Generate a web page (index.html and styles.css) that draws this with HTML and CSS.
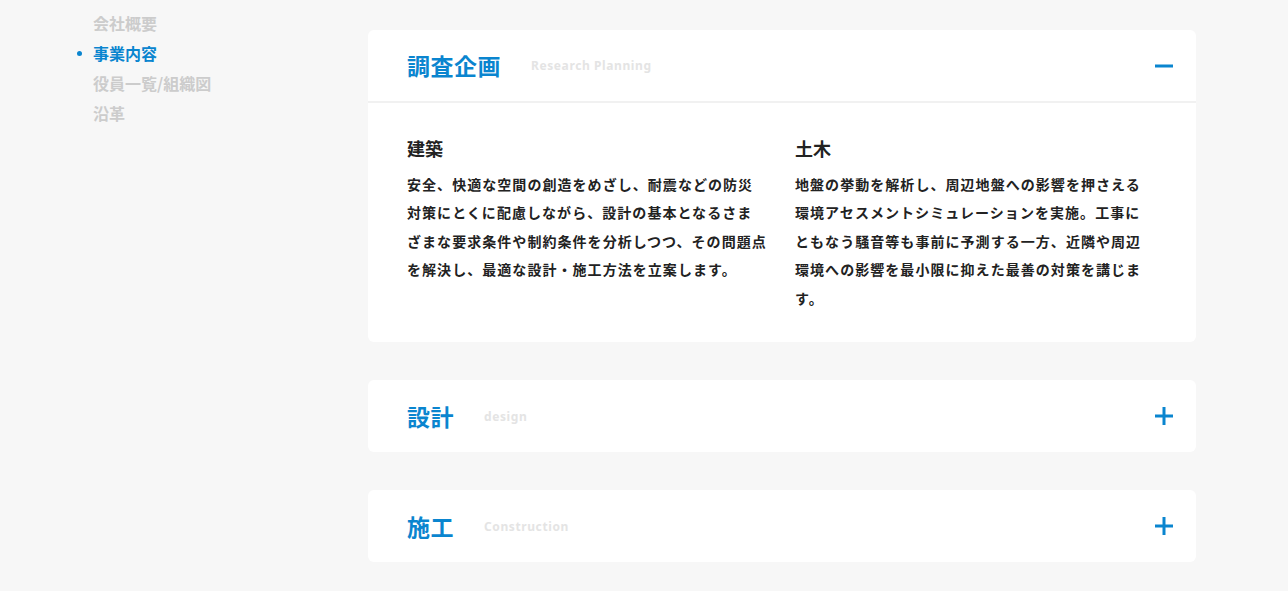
FILE: index.html
```html
<!DOCTYPE html>
<html lang="ja">
<head>
<meta charset="utf-8">
<title>事業内容</title>
<link rel="stylesheet" href="styles.css">
</head>
<body>
<div class="page">
  <nav class="sidebar">
    <ul class="nav">
      <li class="nav-item">会社概要</li>
      <li class="nav-item is-active">事業内容</li>
      <li class="nav-item">役員一覧/組織図</li>
      <li class="nav-item">沿革</li>
    </ul>
  </nav>
  <main class="main">
    <section class="card is-open">
      <header class="card-head">
        <h2 class="card-title">調査企画</h2>
        <span class="card-sub">Research Planning</span>
        <span class="toggle">
          <svg width="18" height="18" viewBox="0 0 18 18"><rect x="0" y="7.5" width="18" height="3" fill="#0a85cf"/></svg>
        </span>
      </header>
      <div class="card-body">
        <div class="col">
          <h3 class="col-title">建築</h3>
          <p class="col-text">安全、快適な空間の創造をめざし、耐震などの防災<br>対策にとくに配慮しながら、設計の基本となるさま<br>ざまな要求条件や制約条件を分析しつつ、その問題点<br>を解決し、最適な設計・施工方法を立案します。</p>
        </div>
        <div class="col">
          <h3 class="col-title">土木</h3>
          <p class="col-text">地盤の挙動を解析し、周辺地盤への影響を押さえる<br>環境アセスメントシミュレーションを実施。工事に<br>ともなう騒音等も事前に予測する一方、近隣や周辺<br>環境への影響を最小限に抑えた最善の対策を講じま<br>す。</p>
        </div>
      </div>
    </section>
    <section class="card">
      <header class="card-head">
        <h2 class="card-title">設計</h2>
        <span class="card-sub">design</span>
        <span class="toggle">
          <svg width="18" height="18" viewBox="0 0 18 18"><rect x="0" y="7.5" width="18" height="3" fill="#0a85cf"/><rect x="7.5" y="0" width="3" height="18" fill="#0a85cf"/></svg>
        </span>
      </header>
    </section>
    <section class="card">
      <header class="card-head">
        <h2 class="card-title">施工</h2>
        <span class="card-sub">Construction</span>
        <span class="toggle">
          <svg width="18" height="18" viewBox="0 0 18 18"><rect x="0" y="7.5" width="18" height="3" fill="#0a85cf"/><rect x="7.5" y="0" width="3" height="18" fill="#0a85cf"/></svg>
        </span>
      </header>
    </section>
  </main>
</div>
</body>
</html>
```

FILE: styles.css
```css
* { box-sizing: border-box; }
html, body { margin: 0; padding: 0; }
body {
  background: #f7f7f7;
  font-family: "Noto Sans CJK JP", "Noto Sans", sans-serif;
  color: #222;
  width: 1288px;
  height: 591px;
  overflow: hidden;
}
.page {
  display: flex;
  align-items: flex-start;
}
.sidebar {
  width: 368px;
  padding: 8px 0 0 93px;
}
.nav {
  list-style: none;
  margin: 0;
  padding: 0;
}
.nav-item {
  position: relative;
  font-size: 16px;
  font-weight: 700;
  line-height: 30px;
  color: #cccccc;
}
.nav-item.is-active { color: #0a85cf; }
.nav-item.is-active::before {
  content: "";
  position: absolute;
  left: -16px;
  top: 13px;
  width: 5px;
  height: 5px;
  border-radius: 50%;
  background: #0a85cf;
}
.main {
  width: 828px;
  padding-top: 30px;
  display: flex;
  flex-direction: column;
  gap: 38px;
}
.card {
  background: #fff;
  border-radius: 6px;
}
.card-head {
  height: 72px;
  display: flex;
  align-items: center;
  padding: 0 23px 0 39px;
}
.is-open .card-head {
  border-bottom: 2px solid #f1f1f1;
  height: 73px;
}
.card-title {
  margin: 0;
  font-size: 23px;
  font-weight: 700;
  letter-spacing: 0.5px;
  color: #0a85cf;
  line-height: 1;
}
.card-sub {
  margin-left: 30px;
  font-family: "Noto Sans", sans-serif;
  font-size: 12px;
  font-weight: 700;
  letter-spacing: 0.6px;
  color: #e4e4e4;
}
.toggle {
  margin-left: auto;
  display: flex;
}
.card-body {
  display: grid;
  grid-template-columns: 388px 1fr;
  padding: 32px 39px 30px;
}
.col-title {
  margin: 0 0 9px;
  font-size: 18px;
  font-weight: 700;
  line-height: 26px;
  color: #222;
}
.col-text {
  margin: 0;
  font-size: 14px;
  font-weight: 700;
  line-height: 28.4px;
  letter-spacing: 1.05px;
  color: #222;
  white-space: nowrap;
}
```
